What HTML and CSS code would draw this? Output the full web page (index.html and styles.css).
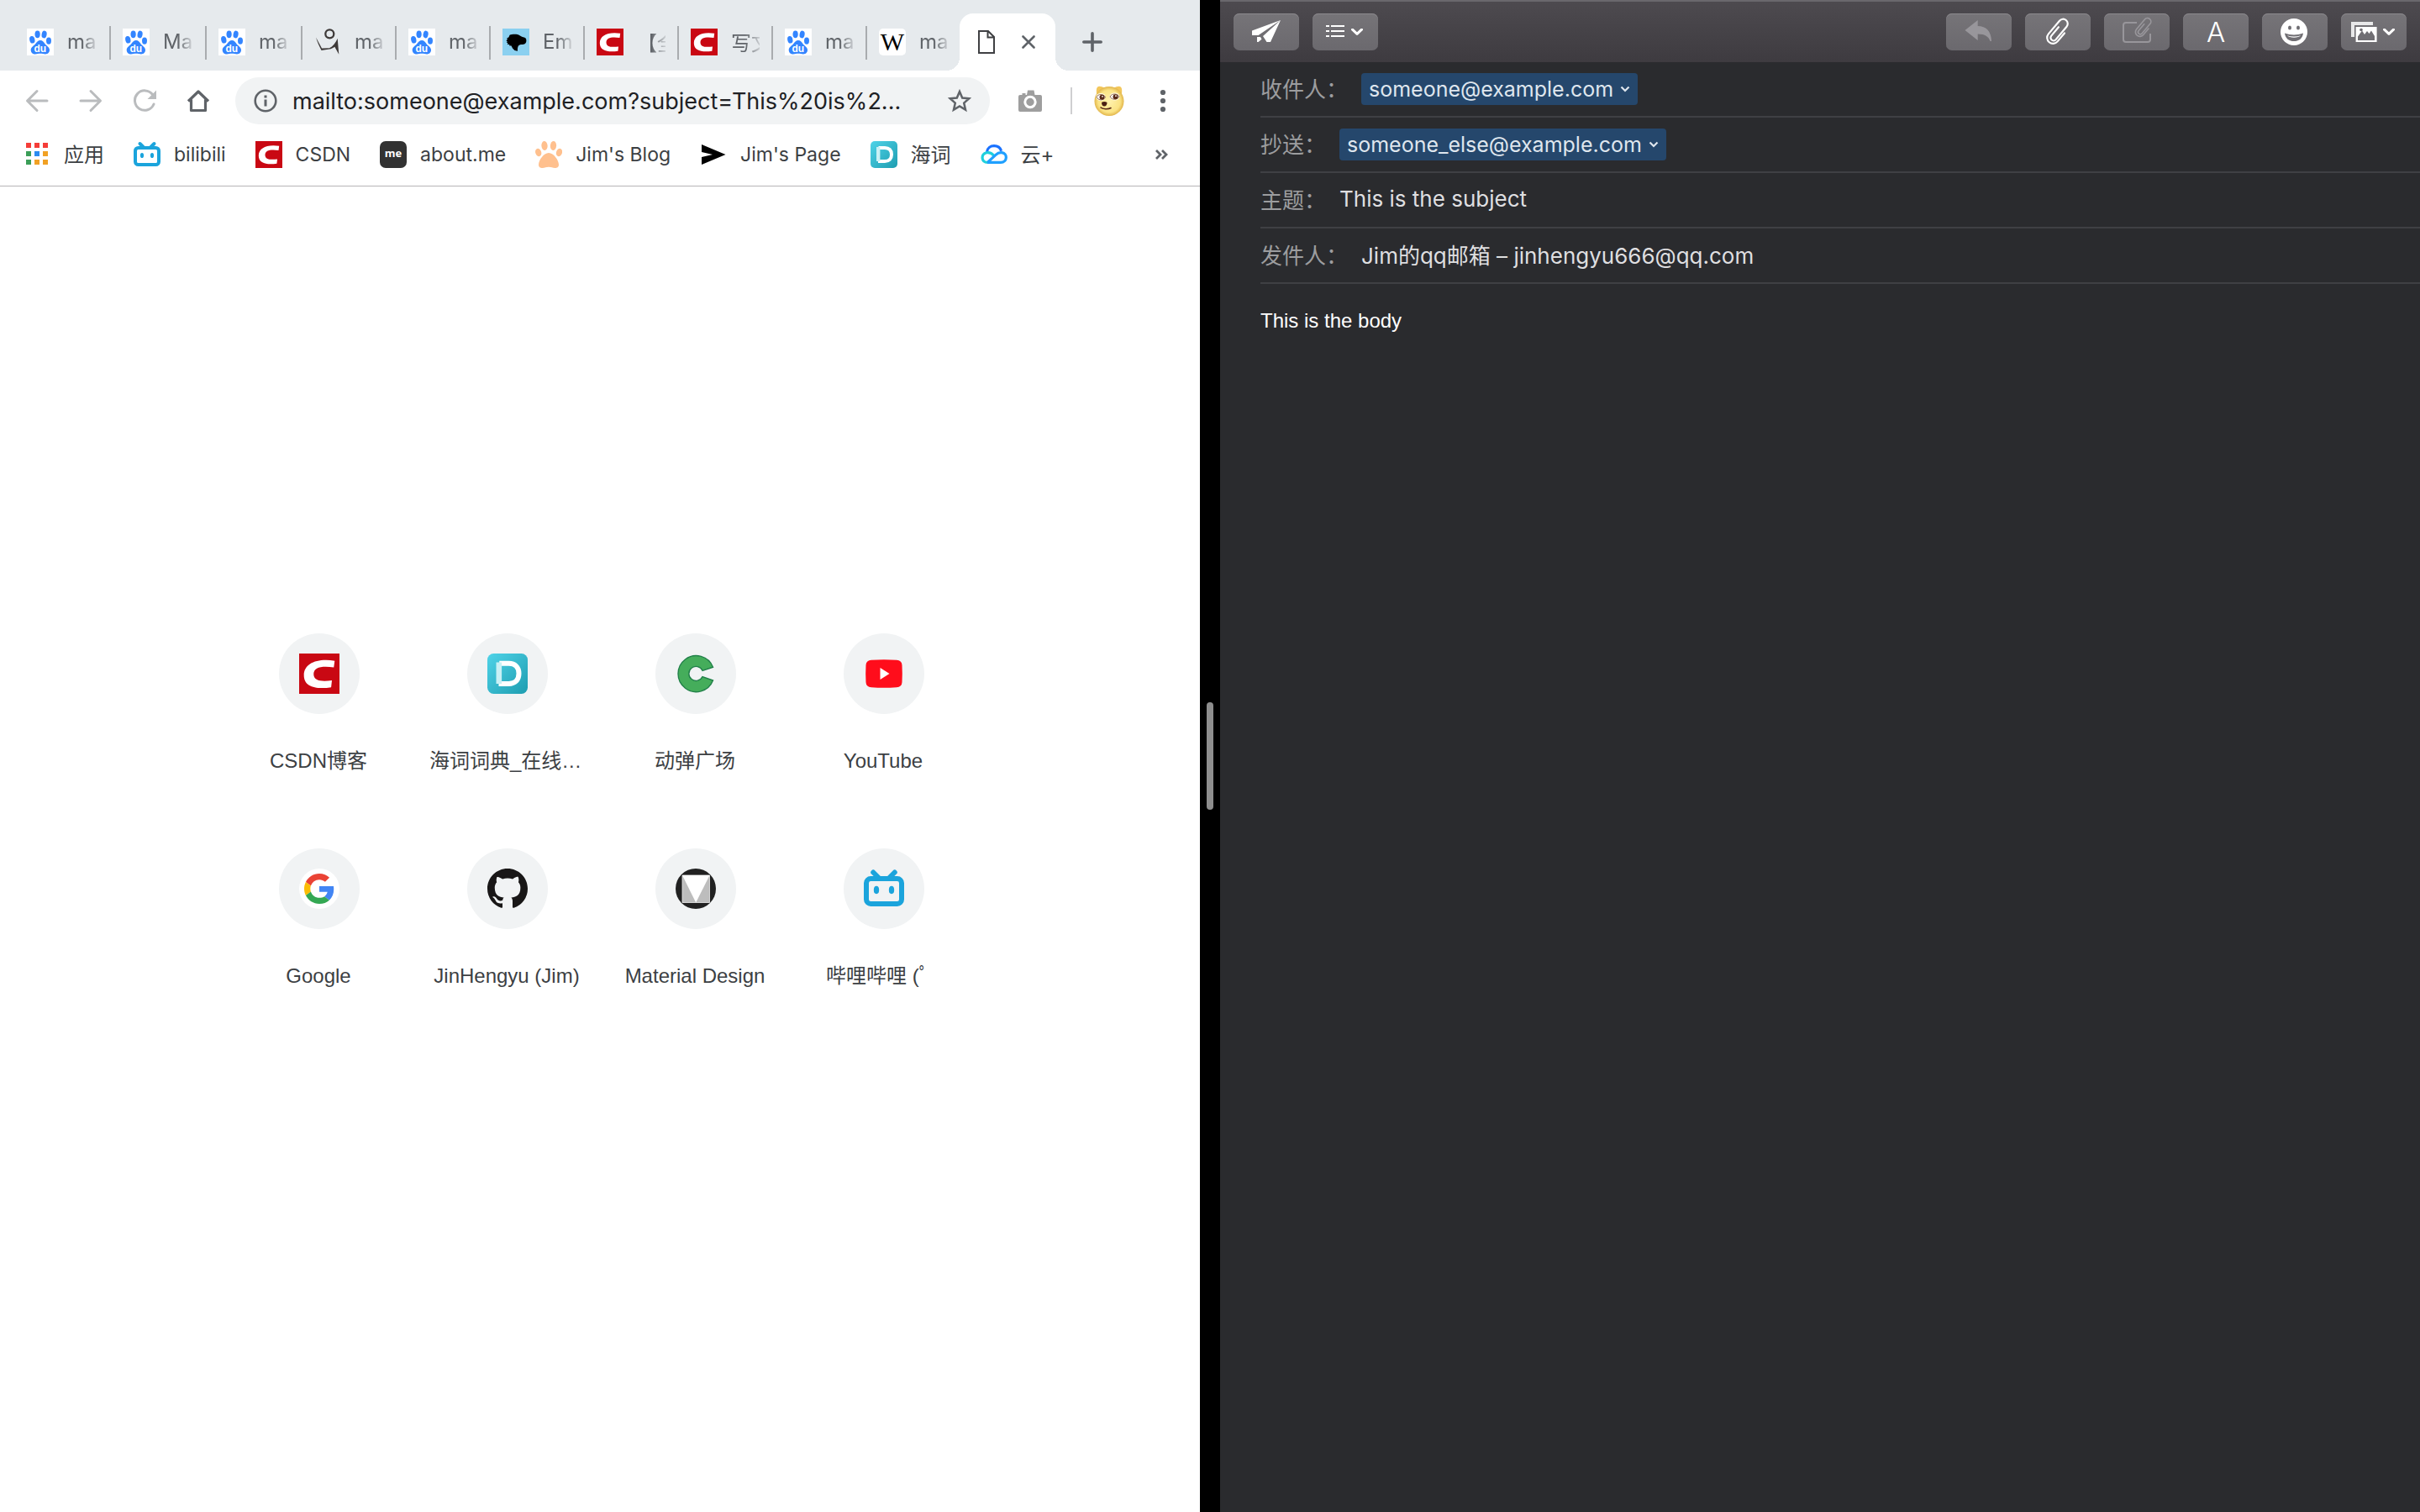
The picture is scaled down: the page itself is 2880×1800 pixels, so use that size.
FILE: index.html
```html
<!DOCTYPE html>
<html lang="zh-CN">
<head>
<meta charset="utf-8">
<title>Split view: browser and mail</title>
<link rel="stylesheet" href="styles.css">
</head>
<body>
<svg class="sprite" aria-hidden="true">
  <symbol id="baidu" viewBox="0 0 32 32">
    <rect width="32" height="32" fill="#fff"/>
    <g fill="#3385ff">
      <ellipse cx="6.3" cy="13.3" rx="3.1" ry="4.3" transform="rotate(-12 6.3 13.3)"/>
      <ellipse cx="12.6" cy="6.8" rx="3.1" ry="4.4"/>
      <ellipse cx="20.6" cy="7" rx="3" ry="4.4" transform="rotate(10 20.6 7)"/>
      <ellipse cx="26" cy="14.6" rx="3" ry="4.2"/>
      <path d="M16 14c2.600 0 4 1.800 5.400 4 1.700 2.600 5.600 4 5.600 7.600 0 3-2 4.900-5 4.900-2.200 0-3.800-.7-6-.7s-3.800.7-6 .7c-3 0-5.300-2-5.300-5 0-3.400 3.700-4.900 5.600-7.500C11.900 15.800 13.400 14 16 14z"/>
    </g>
    <text x="15.800" y="28" text-anchor="middle" class="glyph-du">du</text>
  </symbol>
  <symbol id="csdn" viewBox="0 0 32 32">
    <rect width="32" height="32" fill="#c90813"/>
    <path fill="#fff" d="M28.200 5.800C14 3.600 3.800 8 3.800 17.300c0 9.400 10 11.200 21.600 9.500l.6-5.400c-8.800 1.200-14.500.2-14.500-5 0-5.600 6.500-6.700 16-5.400z"/>
  </symbol>
  <symbol id="bili" viewBox="0 0 32 32">
    <g fill="none" stroke="#1ba4dc" stroke-width="4" stroke-linecap="round" stroke-linejoin="round">
      <rect x="2" y="8" width="28" height="20" rx="3.500"/>
      <path d="M7.500 3l4 4M24.500 3l-4 4"/>
    </g>
    <ellipse cx="10" cy="17" rx="2.100" ry="3.100" fill="#1ba4dc"/>
    <ellipse cx="22" cy="17" rx="2.100" ry="3.100" fill="#1ba4dc"/>
  </symbol>
  <symbol id="dict" viewBox="0 0 32 32">
    <defs><linearGradient id="teal" x1="0" y1="0" x2="1" y2="1"><stop offset="0" stop-color="#4fd3e8"/><stop offset="1" stop-color="#1e9db0"/></linearGradient></defs>
    <rect width="32" height="32" rx="5" fill="url(#teal)"/>
    <path d="M9.500 7.900h7.500c5 0 8 3 8 8s-3 8.100-8 8.100H9" fill="none" stroke="#fff" stroke-width="4"/>
    <path d="M9.200 7v17" stroke="#c9f0f5" stroke-width="4.400"/>
  </symbol>
  <symbol id="chev" viewBox="0 0 14 8"><path d="M1.500 1.200L7 6.400l5.500-5.200" fill="none" stroke="#fff" stroke-width="3" stroke-linecap="round" stroke-linejoin="round"/></symbol>
  <symbol id="clip" viewBox="-20 -20 40 40" overflow="visible">
    <path d="M7-4V9A7 7 0 0 1-7 9v-20.500A5.500 5.500 0 0 1 4-11.500V8.500A3.500 3.500 0 0 1-3 8.500V-5" transform="rotate(40)" fill="none" stroke="currentColor" stroke-width="2.200" stroke-linecap="round"/>
  </symbol>
</svg>

<div class="screen">
  <section class="browser" aria-label="Browser">
    <nav class="tabs">
      <button class="tab"><svg class="i32"><use href="#baidu"/></svg><span>ma</span></button>
      <button class="tab"><svg class="i32"><use href="#baidu"/></svg><span>Ma</span></button>
      <button class="tab"><svg class="i32"><use href="#baidu"/></svg><span>ma</span></button>
      <button class="tab"><svg class="i32" viewBox="0 0 32 32"><circle cx="18.300" cy="6.300" r="5" fill="none" stroke="#3e3a39" stroke-width="2.300"/><path fill="#3e3a39" d="M2 10.500L9 23.500l9-.3c4-2 7.500-6 9.700-11.500l1.600 19-5-9c-2 1.500-4 2.500-6.300 2.900L8.500 26C6 21 3.500 16 2 10.500z"/></svg><span>ma</span></button>
      <button class="tab"><svg class="i32"><use href="#baidu"/></svg><span>ma</span></button>
      <button class="tab"><svg class="i32" viewBox="0 0 32 32"><rect width="32" height="32" fill="#8bd0f0"/><path d="M8.500 7.800c3-1.300 9-1.600 12 .4 1.600 1.200 3.500 2 6 2.600 1.800.7 2.200 3 1.700 5.200-.6 2.300-2.700 3.200-5 3-2 0-3.800.4-4.500 2-.7 1.500-.9 3.500-.7 5.700l-3.500-.7-2.500-2.500-1.500-3-2.500-.2.300-1.500-2.500.2.700-2-1.700-.3 1-1.500-1.300-.7 1.500-2L5 11.700l2.500-1.500z"/></svg><span>Em</span></button>
      <button class="tab"><svg class="i32"><use href="#csdn"/></svg><span>【全</span></button>
      <button class="tab"><svg class="i32"><use href="#csdn"/></svg><span>写文</span></button>
      <button class="tab"><svg class="i32"><use href="#baidu"/></svg><span>ma</span></button>
      <button class="tab"><svg class="i32" viewBox="0 0 32 32"><rect width="32" height="32" rx="5" fill="#fff"/><text x="16" y="26" text-anchor="middle" class="glyph-w">W</text></svg><span>ma</span></button>
      <div class="tab-active">
        <svg class="doc" viewBox="0 0 20 28"><path d="M1 1h11l7 7v19H1zM11.500 1v7.500H19" fill="none" stroke="#3f4043" stroke-width="2"/></svg>
        <button class="plain" aria-label="Close tab"><svg class="i16" viewBox="0 0 16 16"><path d="M1.500 1.500l13 13m0-13l-13 13" stroke="#5f6368" stroke-width="2.600" stroke-linecap="round"/></svg></button>
      </div>
      <button class="plain add" aria-label="New tab"><svg class="i24" viewBox="0 0 24 24"><path d="M12 1.800v20.400M1.800 12h20.400" stroke="#5f6368" stroke-width="3.600" stroke-linecap="round"/></svg></button>
    </nav>

    <div class="toolbar">
      <button class="plain nav" aria-label="Back"><svg class="i28" viewBox="0 0 28 28"><path d="M26 14H3M14 2.500L2.500 14 14 25.500" fill="none" stroke="#babcbe" stroke-width="3" stroke-linecap="round" stroke-linejoin="round"/></svg></button>
      <button class="plain nav" aria-label="Forward"><svg class="i28" viewBox="0 0 28 28"><path d="M2 14h23M14 2.500L25.500 14 14 25.500" fill="none" stroke="#babcbe" stroke-width="3" stroke-linecap="round" stroke-linejoin="round"/></svg></button>
      <button class="plain nav" aria-label="Reload"><svg class="i28" viewBox="0 0 28 28"><path d="M23.500 6.500A11.700 11.700 0 1 0 25 18" fill="none" stroke="#babcbe" stroke-width="3" stroke-linecap="round"/><path d="M28 1.500V12H17.500z" fill="#babcbe"/></svg></button>
      <button class="plain nav" aria-label="Home"><svg class="i28" viewBox="0 0 28 28"><path d="M2 14.500L14 3l12 11.500M5.500 12.500V25.500h17V12.500" fill="none" stroke="#5f6368" stroke-width="3.200" stroke-linejoin="round"/></svg></button>
      <div class="address">
        <svg class="i28" viewBox="0 0 28 28"><circle cx="14" cy="14" r="12.300" fill="none" stroke="#5f6368" stroke-width="2.600"/><path d="M12.500 7.500h3v3h-3zM12.500 12.500h3v8h-3z" fill="#5f6368"/></svg>
        <input class="url" aria-label="Address" value="mailto:someone@example.com?subject=This%20is%2...">
        <button class="plain" aria-label="Bookmark"><svg class="i28" viewBox="0 0 28 28"><path d="M14 3l3.200 7.500 8.100.7-6.100 5.400 1.800 8L14 20.400 7 24.600l1.800-8-6.100-5.400 8.100-.7z" fill="none" stroke="#5f6368" stroke-width="2.500"/></svg></button>
      </div>
      <button class="plain cam" aria-label="Screenshot"><svg class="i28" viewBox="0 0 28 28"><path fill="#9e9e9e" d="M3 7h1.500V5h4v2H10l1-5.500h7.500l1 5.500H26a2 2 0 0 1 2 2v16a2 2 0 0 1-2 2H2a2 2 0 0 1-2-2V9a2 2 0 0 1 2-2z"/><circle cx="14" cy="15.500" r="6.200" fill="none" stroke="#fff" stroke-width="3"/></svg></button>
      <span class="rule"></span>
      <button class="plain nav" aria-label="Profile"><svg class="i40" viewBox="0 0 40 40">
        <defs><radialGradient id="face"><stop offset="0" stop-color="#fff2ae"/><stop offset=".75" stop-color="#fbe384"/><stop offset="1" stop-color="#e2b64c"/></radialGradient></defs>
        <path d="M5 12Q4 4 7 3t8 2zM35 12q1-8-2-9t-8 2z" fill="#f3c75c"/><circle cx="20" cy="20.500" r="17.500" fill="url(#face)"/>
        <ellipse cx="10" cy="15.500" rx="5.500" ry="4.500" fill="#fffbe8"/><ellipse cx="26.500" cy="15" rx="6" ry="4.500" fill="#fffbe8"/>
        <path d="M5 15.500c2-4 8-4 10.500 0-1.500 4-8 5-10.500 0zM21 15c2-4 9-4 11 0-2 4-9 4.500-11 0z" fill="#fff" stroke="#7b4a2c" stroke-width=".8"/>
        <circle cx="11.500" cy="15.800" r="3" fill="#5a2a18"/><circle cx="27.500" cy="15.200" r="3" fill="#5a2a18"/><circle cx="12" cy="14.800" r=".9" fill="#fff"/><circle cx="28" cy="14.200" r=".9" fill="#fff"/>
        <path d="M11 22c2-1.500 4.500-1.500 6.500 0 0 3-1.500 4.500-3.300 4.500S11 25 11 22z" fill="#4a2014"/>
        <path d="M10 28c2 2 9 2.500 12 .5" fill="none" stroke="#5a2a18" stroke-width="1.600" stroke-linecap="round"/>
      </svg></button>
      <button class="plain nav" aria-label="Menu"><svg class="i28" viewBox="0 0 28 28" fill="#5f6368"><circle cx="14" cy="4" r="3.100"/><circle cx="14" cy="14" r="3.100"/><circle cx="14" cy="24" r="3.100"/></svg></button>
    </div>

    <nav class="bookmarks">
      <a href="#" class="cjk"><svg class="i32" viewBox="0 0 32 32"><path fill="#f53d38" d="M3 2h6v6H3zM13 2h6v6h-6zM23 2h6v6h-6z"/><path fill="#3b9e58" d="M3 12h6v6H3zM3 22h6v6H3z"/><path fill="#2b8cf0" d="M13 12h6v6h-6z"/><path fill="#f1a124" d="M23 12h6v6h-6zM13 22h6v6h-6zM23 22h6v6h-6z"/></svg><span>应用</span></a>
      <a href="#"><svg class="i32"><use href="#bili"/></svg>bilibili</a>
      <a href="#"><svg class="i32"><use href="#csdn"/></svg>CSDN</a>
      <a href="#"><svg class="i32" viewBox="0 0 32 32"><rect width="32" height="32" rx="7" fill="#323232"/><text x="16" y="19" text-anchor="middle" class="glyph-me">me</text></svg>about.me</a>
      <a href="#"><svg class="i32" viewBox="0 0 32 32" fill="#ffc08e"><ellipse cx="3.700" cy="13.500" rx="3.500" ry="4.800" transform="rotate(-18 3.700 13.500)"/><ellipse cx="11" cy="5.500" rx="3.600" ry="5.500" transform="rotate(-6 11 5.500)"/><ellipse cx="21.500" cy="5.500" rx="3.600" ry="5.500" transform="rotate(6 21.500 5.500)"/><ellipse cx="28.500" cy="13.500" rx="3.500" ry="4.800" transform="rotate(18 28.500 13.500)"/><path d="M16 14c6 0 12 9 12 14 0 3-2 4-4.500 4-3 0-4.500-1.200-7.500-1.200S11.500 32 8.500 32C6 32 4 31 4 28c0-5 6-14 12-14z"/></svg>Jim's Blog</a>
      <a href="#"><svg class="i32" viewBox="0 0 32 32"><path d="M2 4l28.500 12L2 28v-9l13-3-13-3z"/></svg>Jim's Page</a>
      <a href="#" class="cjk"><svg class="i32"><use href="#dict"/></svg><span>海词</span></a>
      <a href="#" class="cjk"><svg class="i32" viewBox="0 0 32 32" fill="none" stroke-width="3.200"><path d="M7.500 13C8 8 12 5.700 16 5.700c4 0 7.500 2.300 8.600 6" stroke="#1a72ff"/><path d="M16 17.500c-3-3.500-6-4.300-9-3.700-7 2-6.500 11.500 1.500 11.600" stroke="#1fd0dd"/><path d="M8 25.400h16c8 0 8.500-11 1-11.700-3-.3-5 .8-7 2.700L8.500 25.200" stroke="#1fa0ff"/></svg><span>云+</span></a>
      <button class="plain more" aria-label="More bookmarks"><svg class="i16" viewBox="0 0 16 16"><path d="M2 3l5 5-5 5M9 3l5 5-5 5" fill="none" stroke="#5f6368" stroke-width="2.800"/></svg></button>
    </nav>

    <main class="newtab">
      <div class="tiles">
        <a href="#" class="tile"><span class="disc"><svg class="i48"><use href="#csdn"/></svg></span><span class="name">CSDN博客</span></a>
        <a href="#" class="tile"><span class="disc"><svg class="i48"><use href="#dict"/></svg></span><span class="name">海词词典_在线词典</span></a>
        <a href="#" class="tile"><span class="disc"><svg class="i48" viewBox="0 0 48 48"><path d="M44.500 16.200A21.500 21.500 0 1 0 44.500 32L32 27.500a8.500 8.500 0 1 1 0-7.200z" fill="#45ad5b" stroke="#218049" stroke-width="1.400"/></svg></span><span class="name">动弹广场</span></a>
        <a href="#" class="tile"><span class="disc"><svg class="i48" viewBox="0 0 48 48"><path d="M9 7.700q15-1 30 0 6.200.3 6.500 6 .6 10.300 0 20.600-.3 5.700-6.500 6-15 1-30 0-6.200-.3-6.500-6-.6-10.300 0-20.600.3-5.700 6.500-6z" fill="#ff0d1b"/><path d="M19.500 17L30.500 24l-11 7z" fill="#fff"/></svg></span><span class="name">YouTube</span></a>
        <a href="#" class="tile"><span class="disc"><svg class="i48" viewBox="-8 -8 64 64"><circle cx="24" cy="24" r="32" fill="#fff"/><path fill="#ea4335" d="M24 9.500c3.540 0 6.710 1.220 9.210 3.600l6.850-6.850C35.900 2.380 30.470 0 24 0 14.620 0 6.510 5.380 2.560 13.220l7.980 6.190C12.430 13.720 17.740 9.500 24 9.500z"/><path fill="#4285f4" d="M46.980 24.550c0-1.570-.15-3.090-.38-4.550H24v9.020h12.940c-.58 2.960-2.260 5.480-4.780 7.180l7.730 6c4.510-4.180 7.090-10.360 7.090-17.650z"/><path fill="#fbbc05" d="M10.530 28.590c-.48-1.450-.76-2.990-.76-4.590s.27-3.140.76-4.590l-7.980-6.190C.92 16.460 0 20.120 0 24c0 3.880.92 7.540 2.560 10.780l7.970-6.190z"/><path fill="#34a853" d="M24 48c6.480 0 11.930-2.130 15.890-5.810l-7.730-6c-2.150 1.450-4.920 2.300-8.160 2.300-6.260 0-11.570-4.220-13.470-9.910l-7.980 6.190C6.510 42.620 14.620 48 24 48z"/></svg></span><span class="name">Google</span></a>
        <a href="#" class="tile"><span class="disc"><svg class="i48" viewBox="0 0 16 16"><path fill="#191717" d="M8 0C3.580 0 0 3.580 0 8c0 3.540 2.290 6.530 5.470 7.590.4.070.55-.17.55-.38 0-.19-.01-.82-.01-1.490-2.010.37-2.530-.49-2.690-.94-.09-.23-.48-.94-.82-1.130-.28-.15-.68-.52-.01-.53.63-.01 1.080.58 1.230.82.72 1.210 1.870.87 2.330.66.070-.52.280-.87.510-1.070-1.780-.2-3.640-.89-3.640-3.950 0-.87.310-1.590.82-2.150-.08-.2-.36-1.020.08-2.120 0 0 .67-.21 2.200.82.640-.18 1.320-.27 2-.27s1.360.09 2 .27c1.530-1.040 2.200-.82 2.200-.82.440 1.100.160 1.920.080 2.120.510.560.820 1.270.820 2.150 0 3.070-1.870 3.750-3.650 3.950.290.250.540.730.540 1.480 0 1.070-.01 1.930-.01 2.200 0 .210.150.460.550.380A8.010 8.010 0 0 0 16 8c0-4.420-3.580-8-8-8z"/></svg></span><span class="name">JinHengyu (Jim)</span></a>
        <a href="#" class="tile"><span class="disc"><svg class="i48" viewBox="0 0 48 48"><circle cx="24" cy="24" r="24" fill="#212121"/><path d="M8 8h32.500v32.500H8z" fill="#bdbdbd" stroke="#eee" stroke-width=".8"/><path d="M8 8h32.500L24.200 40.500z" fill="#fff"/></svg></span><span class="name">Material Design</span></a>
        <a href="#" class="tile"><span class="disc"><svg class="i48"><use href="#bili"/></svg></span><span class="name">哔哩哔哩 (ﾟ&nbsp;&nbsp;</span></a>
      </div>
    </main>
  </section>

  <div class="divider" role="separator" aria-orientation="vertical"><span class="grip"></span></div>

  <section class="mail" aria-label="Mail">
    <header class="mailbar">
      <button class="tool" aria-label="Send"><svg viewBox="0 0 78 44" fill="#fff"><path d="M56 8L22 20.500V26h7.500zM56 8L44 34h-4.500l-4.500-7zM28 28h4l1.500 2.800L29.500 34H28z"/></svg></button>
      <button class="tool" aria-label="List format"><svg viewBox="0 0 78 44"><path d="M16 15h4m2 0h16M16 21h4m2 0h16M16 27h4m2 0h16" stroke="#fff" stroke-width="2"/><use href="#chev" x="46" y="18" width="14" height="8"/></svg></button>
      <span class="spacer"></span>
      <button class="tool off" aria-label="Reply" disabled><svg viewBox="0 0 78 44"><path fill="currentColor" d="M22.500 20L37.700 8v7c10 0 16 6 16.300 18h-1.500c-2-5.500-6-8.500-14.800-8.500V32z"/></svg></button>
      <button class="tool" aria-label="Attach"><svg viewBox="0 0 78 44"><use href="#clip" x="19" y="2" width="40" height="40"/></svg></button>
      <button class="tool off" aria-label="Include attachments" disabled><svg viewBox="0 0 78 44"><path d="M39 11H26a3 3 0 0 0-3 3v17a3 3 0 0 0 3 3h26a3 3 0 0 0 3-3v-7" fill="none" stroke="currentColor" stroke-width="2"/><use href="#clip" x="32" y="2" width="30" height="30"/></svg></button>
      <button class="tool letter" aria-label="Fonts">A</button>
      <button class="tool" aria-label="Emoji"><svg viewBox="0 0 78 44"><circle cx="38" cy="22" r="16" fill="#fff"/><g fill="#706e73"><ellipse cx="33" cy="17" rx="2" ry="2.500"/><ellipse cx="43" cy="17" rx="2" ry="2.500"/><path d="M27 23.500c7 2.500 15 2.500 22 0-1 7-5.500 9.500-11 9.500s-10-2.500-11-9.500z"/></g><path d="M30 26.300c5 1.700 11 1.700 16 0-2 3.200-14 3.200-16 0z" fill="#fff"/></svg></button>
      <button class="tool" aria-label="Photos"><svg viewBox="0 0 78 44"><path d="M12 10h26v4H16v14h-4z" fill="#e8e8e9"/><path d="M17.600 16h25v18h-25z" fill="#fff"/><path d="M20 32v-4.500l5-7 3 4.500 3-4 2.500 3 2.500-3.500 4 6.500V32z" fill="#706e73"/><circle cx="24" cy="19.500" r="1.800" fill="#706e73"/><use href="#chev" x="50" y="18" width="14" height="8"/></svg></button>
    </header>
    <form class="fields">
      <div class="field"><span class="label">收件人：</span><button type="button" class="chip">someone@example.com<svg viewBox="0 0 12 8"><path d="M1.500 1.500L6 6l4.500-4.500" fill="none" stroke="#dfe6ee" stroke-width="2.200"/></svg></button></div>
      <div class="field"><span class="label">抄送：</span><button type="button" class="chip">someone_else@example.com<svg viewBox="0 0 12 8"><path d="M1.500 1.500L6 6l4.500-4.500" fill="none" stroke="#dfe6ee" stroke-width="2.200"/></svg></button></div>
      <div class="field"><label class="label" for="subject">主题：</label><input class="value" id="subject" value="This is the subject"></div>
      <div class="field"><label class="label" for="from">发件人：</label><select class="value" id="from"><option>Jim的qq邮箱 – jinhengyu666@qq.com</option></select></div>
      <textarea class="message" aria-label="Message">This is the body</textarea>
    </form>
  </section>
</div>
</body>
</html>
```
FILE: styles.css
```css
* { box-sizing: border-box; }

body {
  margin: 0;
  font-family: Inter, "Noto Sans CJK SC", sans-serif;
  font-size: 24px;
  color: #3c4043;
}

button, input, select, textarea { font: inherit; color: inherit; }
a { color: inherit; text-decoration: none; }
svg { display: block; flex: none; }

.sprite { position: absolute; width: 0; height: 0; }
.i16 { width: 16px; height: 16px; }
.i24 { width: 24px; height: 24px; }
.i28 { width: 28px; height: 28px; }
.i32 { width: 32px; height: 32px; }
.i40 { width: 40px; height: 40px; }
.i48 { width: 48px; height: 48px; }

.glyph-du { font: bold 12px "Liberation Sans", sans-serif; fill: #fff; }
.glyph-me { font: bold 13px "Open Sans", sans-serif; fill: #fff; }
.glyph-w { font: 30px "Liberation Serif", serif; fill: #000; }

.plain {
  display: flex;
  align-items: center;
  justify-content: center;
  padding: 0;
  border: 0;
  background: none;
}

.screen {
  display: grid;
  grid-template-columns: 1fr 24px 1fr;
  min-height: 100vh;
}

/* Browser */
.browser {
  display: flex;
  flex-direction: column;
  min-width: 0;
  background: #fff;
}

.tabs {
  display: flex;
  height: 84px;
  padding: 16px 0 0 18px;
  background: #e6eaed;
}

.tab {
  position: relative;
  display: flex;
  align-items: center;
  gap: 16px;
  width: 112px;
  padding: 0 0 0 14px;
  border: 0;
  background: none;
  color: #5f6368;
}
.tab:nth-child(-n+3) { width: 114px; }
.tab span {
  width: 34px;
  padding-bottom: 2px;
  overflow: hidden;
  text-align: left;
  white-space: nowrap;
  -webkit-mask-image: linear-gradient(90deg, #000 50%, rgba(0, 0, 0, 0.2));
  mask-image: linear-gradient(90deg, #000 50%, rgba(0, 0, 0, 0.2));
}
.tab:not(:nth-child(10))::after {
  content: "";
  position: absolute;
  right: 0;
  top: 15px;
  width: 2px;
  height: 40px;
  background: #a9acaf;
}

.tab-active {
  position: relative;
  display: flex;
  align-items: center;
  gap: 32px;
  width: 114px;
  margin-left: -2px;
  padding-left: 22px;
  border-radius: 16px 16px 0 0;
  background: #fff;
}
.tab-active::before,
.tab-active::after {
  content: "";
  position: absolute;
  bottom: 0;
  width: 16px;
  height: 16px;
}
.tab-active::before { right: 100%; background: radial-gradient(circle at 0 0, transparent 16px, #fff 16px); }
.tab-active::after { left: 100%; background: radial-gradient(circle at 100% 0, transparent 16px, #fff 16px); }
.doc { width: 20px; height: 28px; }
.add { width: 88px; }

.toolbar {
  display: flex;
  align-items: center;
  gap: 24px;
  padding: 8px 24px;
}
.nav { width: 40px; height: 40px; }
.cam { width: 48px; height: 40px; }
.rule { width: 2px; height: 32px; background: #cfcfd1; }

.address {
  flex: 1;
  display: flex;
  align-items: center;
  gap: 18px;
  height: 56px;
  min-width: 0;
  padding: 0 22px;
  border-radius: 28px;
  background: #f1f3f4;
}
.url {
  flex: 1;
  min-width: 0;
  padding: 0;
  border: 0;
  outline: 0;
  background: none;
  font-size: 27px;
  color: #202124;
}

.bookmarks {
  display: flex;
  align-items: center;
  gap: 35px;
  height: 66px;
  padding: 4px 26px 13px 28px;
  border-bottom: 1px solid #b6b4b6;
  font-size: 23px;
}
.bookmarks a {
  display: flex;
  align-items: center;
  gap: 16px;
  height: 32px;
  white-space: nowrap;
}
.bookmarks .cjk { font-size: 24px; }
.bookmarks .cjk span { padding-bottom: 3px; }
.more { width: 40px; margin-left: auto; }

.newtab {
  flex: 1;
  padding: 532px 0 0 4px;
}
.tiles {
  display: grid;
  grid-template-columns: repeat(4, 224px);
  justify-content: center;
  row-gap: 88px;
}
.tile {
  display: flex;
  flex-direction: column;
  align-items: center;
  gap: 40px;
}
.disc {
  display: grid;
  place-items: center;
  width: 96px;
  height: 96px;
  border-radius: 50%;
  background: #f1f3f4;
}
.name {
  max-width: 186px;
  height: 32px;
  padding-right: 2px;
  overflow: hidden;
  text-overflow: ellipsis;
  white-space: nowrap;
  font-family: "Liberation Sans", "Noto Sans CJK SC", sans-serif;
  line-height: 32px;
}

/* Split handle */
.divider {
  display: grid;
  place-items: center;
  background: #000;
}
.grip {
  width: 8px;
  height: 128px;
  border-radius: 4px;
  background: #8e8e8e;
}

/* Mail */
.mail {
  display: flex;
  flex-direction: column;
  min-width: 0;
  background: #2a2b2e;
  color: #dfdfe0;
}
.mailbar {
  display: flex;
  gap: 16px;
  height: 74px;
  padding: 14px 16px;
  border-top: 2px solid #6a686d;
  background: linear-gradient(#4d4a4f, #3e3b40);
}
.spacer { flex: 1; }
.tool {
  width: 78px;
  height: 44px;
  padding: 0;
  border: 0;
  border-radius: 7px;
  background: linear-gradient(#767478, #6b696e);
  box-shadow: inset 0 1px #8b898d;
  color: #fff;
}
.tool svg { width: 78px; height: 44px; }
.off { color: #98969b; }
.letter { font-size: 33px; line-height: 44px; font-weight: 300; }

.fields {
  flex: 1;
  display: flex;
  flex-direction: column;
  padding-left: 48px;
}
.field {
  display: flex;
  align-items: center;
  height: 66px;
  border-bottom: 2px solid #3f4044;
  font-size: 26px;
}
.label {
  margin-right: 16px;
  padding-bottom: 3px;
  color: #9c9d9f;
}
.chip {
  display: flex;
  align-items: center;
  gap: 8px;
  height: 38px;
  padding: 0 9px;
  border: 0;
  border-radius: 4px;
  background: #25476c;
  color: #dfe6ee;
  font-size: 25px;
}
.chip svg { width: 12px; height: 8px; }
.value {
  flex: 1;
  padding: 0;
  border: 0;
  outline: 0;
  appearance: none;
  background: none;
}
input.value { padding-bottom: 3px; }
.message {
  flex: 1;
  padding: 30px 0 0;
  border: 0;
  outline: 0;
  resize: none;
  background: none;
  color: #fff;
  font-family: "Liberation Sans", sans-serif;
  line-height: 28px;
}
```
